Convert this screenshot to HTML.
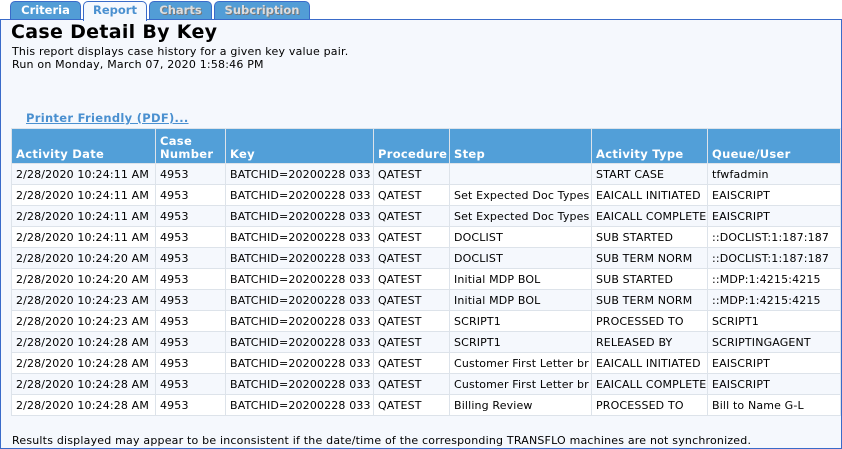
<!DOCTYPE html>
<html><head><meta charset="utf-8"><style>
*{margin:0;padding:0;box-sizing:border-box}
body{width:842px;height:449px;background:#fff;font-family:"DejaVu Sans","Liberation Sans",sans-serif;position:relative;overflow:hidden}
.tab{position:absolute;top:1px;height:19px;border:1px solid #3a6bc9;border-bottom:none;border-radius:5px 5px 0 0;background:#529dd6;color:#fff;font-weight:bold;font-size:11.5px;text-align:center;line-height:17px}
.tab.g{color:#ddd;text-shadow:1px 1px 0 #777}
.tab.a{background:#f5f8fd;color:#4a90d0;height:20px;z-index:2}
.frame{position:absolute;left:0;top:19px;width:842px;height:430px;border:1px solid #3a6bc9;background:#f5f8fd}
h1{position:absolute;left:11px;top:21px;font-size:19px;font-weight:bold;color:#000;letter-spacing:0.3px}
.t{position:absolute;left:12px;font-size:11px;letter-spacing:0.2px;color:#000;white-space:nowrap}
.lnk{position:absolute;left:26px;top:111px;font-size:11.5px;font-weight:bold;color:#4a90d0;text-decoration:underline;letter-spacing:0.3px}
table{position:absolute;left:11px;top:128px;width:829px;border-collapse:collapse;font-size:11px;letter-spacing:0.15px;table-layout:fixed}
td,th{border:1px solid #dde3ea;padding:0 4px;white-space:nowrap;overflow:hidden;text-align:left}
th{background:#529fd8;color:#fff;font-size:11.5px;height:35px;vertical-align:bottom;padding-bottom:2px;font-weight:bold;line-height:13px;letter-spacing:0.3px}
td{height:21px}
tr:nth-child(even) td{background:#f5f8fd}
tr:nth-child(odd) td{background:#fff}
</style></head><body>
<div class="tab" style="left:10px;width:71px">Criteria</div>
<div class="tab a" style="left:83px;width:64px">Report</div>
<div class="tab g" style="left:149px;width:63px">Charts</div>
<div class="tab g" style="left:214px;width:96px">Subcription</div>
<div class="frame"></div>
<h1>Case Detail By Key</h1>
<div class="t" style="top:45px">This report displays case history for a given key value pair.</div>
<div class="t" style="top:58px">Run on Monday, March 07, 2020 1:58:46 PM</div>
<div class="lnk">Printer Friendly (PDF)...</div>
<table>
<colgroup><col style="width:144px"><col style="width:70px"><col style="width:148px"><col style="width:76px"><col style="width:142px"><col style="width:116px"><col style="width:133px"></colgroup>
<tr><th>Activity Date</th><th>Case<br>Number</th><th>Key</th><th>Procedure</th><th>Step</th><th>Activity Type</th><th>Queue/User</th></tr>
<tr><td>2/28/2020 10:24:11 AM</td><td>4953</td><td>BATCHID=20200228 033</td><td>QATEST</td><td></td><td>START CASE</td><td>tfwfadmin</td></tr>
<tr><td>2/28/2020 10:24:11 AM</td><td>4953</td><td>BATCHID=20200228 033</td><td>QATEST</td><td>Set Expected Doc Types</td><td>EAICALL INITIATED</td><td>EAISCRIPT</td></tr>
<tr><td>2/28/2020 10:24:11 AM</td><td>4953</td><td>BATCHID=20200228 033</td><td>QATEST</td><td>Set Expected Doc Types</td><td>EAICALL COMPLETE</td><td>EAISCRIPT</td></tr>
<tr><td>2/28/2020 10:24:11 AM</td><td>4953</td><td>BATCHID=20200228 033</td><td>QATEST</td><td>DOCLIST</td><td>SUB STARTED</td><td>::DOCLIST:1:187:187</td></tr>
<tr><td>2/28/2020 10:24:20 AM</td><td>4953</td><td>BATCHID=20200228 033</td><td>QATEST</td><td>DOCLIST</td><td>SUB TERM NORM</td><td>::DOCLIST:1:187:187</td></tr>
<tr><td>2/28/2020 10:24:20 AM</td><td>4953</td><td>BATCHID=20200228 033</td><td>QATEST</td><td>Initial MDP BOL</td><td>SUB STARTED</td><td>::MDP:1:4215:4215</td></tr>
<tr><td>2/28/2020 10:24:23 AM</td><td>4953</td><td>BATCHID=20200228 033</td><td>QATEST</td><td>Initial MDP BOL</td><td>SUB TERM NORM</td><td>::MDP:1:4215:4215</td></tr>
<tr><td>2/28/2020 10:24:23 AM</td><td>4953</td><td>BATCHID=20200228 033</td><td>QATEST</td><td>SCRIPT1</td><td>PROCESSED TO</td><td>SCRIPT1</td></tr>
<tr><td>2/28/2020 10:24:28 AM</td><td>4953</td><td>BATCHID=20200228 033</td><td>QATEST</td><td>SCRIPT1</td><td>RELEASED BY</td><td>SCRIPTINGAGENT</td></tr>
<tr><td>2/28/2020 10:24:28 AM</td><td>4953</td><td>BATCHID=20200228 033</td><td>QATEST</td><td>Customer First Letter br</td><td>EAICALL INITIATED</td><td>EAISCRIPT</td></tr>
<tr><td>2/28/2020 10:24:28 AM</td><td>4953</td><td>BATCHID=20200228 033</td><td>QATEST</td><td>Customer First Letter br</td><td>EAICALL COMPLETE</td><td>EAISCRIPT</td></tr>
<tr><td>2/28/2020 10:24:28 AM</td><td>4953</td><td>BATCHID=20200228 033</td><td>QATEST</td><td>Billing Review</td><td>PROCESSED TO</td><td>Bill to Name G-L</td></tr>
</table>
<div class="t" style="top:434px">Results displayed may appear to be inconsistent if the date/time of the corresponding TRANSFLO machines are not synchronized.</div>
</body></html>
